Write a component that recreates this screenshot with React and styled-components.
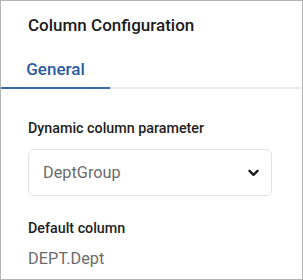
import React, { useState } from 'react';
import styled, { createGlobalStyle } from 'styled-components';

const GlobalStyle = createGlobalStyle`
  html, body {
    margin: 0;
    padding: 0;
    background: #ffffff;
  }
  body {
    font-family: Roboto, 'Liberation Sans', sans-serif;
  }
`;

const tabs = [{ label: 'General', value: 'general' }];

export default function App() {
  const [activeTab, setActiveTab] = useState(tabs[0].value);

  return (
    <>
      <GlobalStyle />
      <Panel>
        <Title>Column Configuration</Title>
        <TabStrip>
          {tabs.map((tab) => (
            <Tab key={tab.value} $active={tab.value === activeTab} onClick={() => setActiveTab(tab.value)}>
              {tab.label}
            </Tab>
          ))}
        </TabStrip>
        <Body>
          <Label>Dynamic column parameter</Label>
          <Select>
            <SelectValue>DeptGroup</SelectValue>
            <svg width="11" height="8" viewBox="0 0 11 8" fill="none">
              <path d="M1.5 1.8 L5.5 5.8 L9.5 1.8" stroke="#1e1e1e" strokeWidth="2.4" strokeLinecap="round" strokeLinejoin="round" />
            </svg>
          </Select>
          <Label $top={23}>Default column</Label>
          <Value>DEPT.Dept</Value>
        </Body>
      </Panel>
    </>
  );
}

const Panel = styled.div`
  box-sizing: border-box;
  width: 303px;
  height: 280px;
  border: 1px solid #b4b4b4;
  background: #ffffff;
  overflow: hidden;
  display: flex;
  flex-direction: column;
`;

const Title = styled.div`
  padding: 14px 27px 0;
  font-size: 17px;
  line-height: 20px;
  font-weight: 500;
  color: #1c1c1c;
`;

const TabStrip = styled.div`
  display: flex;
  margin-top: 24px;
  border-bottom: 2px solid #e9e9e9;
  margin-right: 1px;
`;

const Tab = styled.div`
  width: 109px;
  box-sizing: border-box;
  text-align: center;
  padding-bottom: 8px;
  margin-bottom: -2px;
  font-size: 17px;
  line-height: 20px;
  font-weight: 500;
  color: ${(p) => (p.$active ? '#2a5c9f' : '#555555')};
  border-bottom: 2px solid ${(p) => (p.$active ? '#3a6ba8' : 'transparent')};
  cursor: pointer;
`;

const Body = styled.div`
  padding: 30px 30px 0 27px;
  display: flex;
  flex-direction: column;
`;

const Label = styled.div`
  margin-top: ${(p) => p.$top || 0}px;
  font-size: 14.3px;
  line-height: 18px;
  font-weight: 500;
  color: #1e1e1e;
`;

const Select = styled.div`
  margin-top: 12px;
  height: 47px;
  box-sizing: border-box;
  border: 1px solid #e2e2e2;
  border-radius: 6px;
  display: flex;
  align-items: center;
  justify-content: space-between;
  padding: 0 12px 0 14px;
`;

const SelectValue = styled.span`
  font-size: 16.3px;
  color: #6b6b6b;
`;

const Value = styled.div`
  margin-top: 12px;
  font-size: 16.3px;
  line-height: 20px;
  color: #6b6b6b;
`;
